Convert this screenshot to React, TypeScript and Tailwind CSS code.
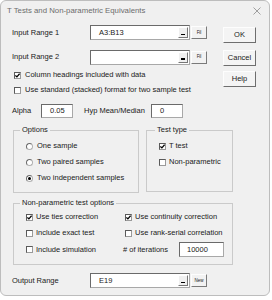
import React from "react";

const font = "font-['Liberation_Sans',Arial,sans-serif]";

function Check({ checked }: { checked?: boolean }) {
  return (
    <span className="flex h-[7px] w-[7px] shrink-0 items-center justify-center border border-[#9a9a9a] border-l-[#5a5a5a] border-t-[#5a5a5a] bg-white">
      {checked && (
        <svg width="5" height="5" viewBox="0 0 5 5">
          <path d="M0.4 2.4 L1.9 3.9 L4.6 0.7" stroke="#000" strokeWidth="1.3" fill="none" />
        </svg>
      )}
    </span>
  );
}

function Radio({ checked }: { checked?: boolean }) {
  return (
    <span className="flex h-[7px] w-[7px] shrink-0 items-center justify-center rounded-full border border-[#b0b0b0] border-l-[#6a6a6a] border-t-[#6a6a6a] bg-white">
      {checked && <span className="h-[3px] w-[3px] rounded-full bg-black" />}
    </span>
  );
}

function RefEdit({ value }: { value?: string }) {
  return (
    <div className="flex h-[15px] w-[100px] items-center border border-[#a8a8a8] border-l-[#6a6a6a] border-t-[#6a6a6a] bg-white">
      <span className="flex-1 pl-[8px]">{value}</span>
      <span className="mr-[1px] flex h-[11px] w-[10px] items-end justify-center border border-white border-b-[#777] border-r-[#777] bg-[#f0f0f0] pb-[2px]">
        <span className="h-[1.5px] w-[4px] bg-black" />
      </span>
    </div>
  );
}

function SmallBtn({ label }: { label: string }) {
  return (
    <div className="ml-[1px] flex h-[13px] w-[16px] items-center justify-center border border-[#fdfdfd] border-b-[#7a7a7a] border-r-[#7a7a7a] bg-[#f2f2f2] text-[4.5px]">
      {label}
    </div>
  );
}

function Btn({ label, className = "" }: { label: string; className?: string }) {
  return (
    <div
      className={`flex h-[16px] w-[33px] items-center justify-center border border-[#fdfdfd] border-b-[#6e6e6e] border-r-[#6e6e6e] bg-[#f4f4f4] ${className}`}
    >
      {label}
    </div>
  );
}

function Field({ value, w, pl }: { value: string; w: string; pl: string }) {
  return (
    <div className={`flex h-[14px] items-center border border-[#a8a8a8] border-l-[#6a6a6a] border-t-[#6a6a6a] bg-white ${w} ${pl}`}>
      {value}
    </div>
  );
}

export default function App() {
  return (
    <div className={`h-[300px] w-[272px] overflow-hidden bg-white text-[7.5px] leading-[10px] text-[#1a1a1a] ${font}`}>
      <div className="flex h-[296px] w-[270px] flex-col rounded-[6px] border border-[#bdbdbd] bg-[#f0f0f0]">
        {/* title bar */}
        <div className="flex h-[19px] items-center justify-between pl-[6px] pr-[8px]">
          <span className="text-[7.8px] text-[#6c6c6c]">T Tests and Non-parametric Equivalents</span>
          <svg width="8" height="8" viewBox="0 0 8 8">
            <path d="M0.5 0.5 L7.5 7.5 M7.5 0.5 L0.5 7.5" stroke="#8a8a8a" strokeWidth="0.8" />
          </svg>
        </div>

        <div className="flex flex-col pl-[11px] pt-[5px]">
          {/* top part with buttons */}
          <div className="flex">
            <div className="flex w-[196px] flex-col">
              <div className="flex h-[15px] items-center">
                <span className="w-[78px]">Input Range 1</span>
                <RefEdit value="A3:B13" />
                <SmallBtn label="Fil" />
              </div>
              <div className="mt-[10px] flex h-[14px] items-center">
                <span className="w-[78px]">Input Range 2</span>
                <RefEdit />
                <SmallBtn label="Fil" />
              </div>
              <div className="mt-[4px] flex h-[14px] items-center gap-[4px] pl-[2px]">
                <Check checked />
                <span>Column headings included with data</span>
              </div>
              <div className="mt-[1px] flex h-[14px] items-center gap-[4px] pl-[2px]">
                <Check />
                <span>Use standard (stacked) format for two sample test</span>
              </div>
            </div>
            <div className="ml-[15px] flex flex-col">
              <Btn label="OK" className="mt-[2px]" />
              <Btn label="Cancel" className="mt-[7px]" />
              <Btn label="Help" className="mt-[5px]" />
            </div>
          </div>

          {/* alpha row */}
          <div className="mt-[7px] flex h-[14px] items-center">
            <span className="w-[29px]">Alpha</span>
            <Field value="0.05" w="w-[32px]" pl="pl-[8px]" />
            <span className="ml-[11px] w-[67px]">Hyp Mean/Median</span>
            <Field value="0" w="w-[32px]" pl="pl-[8px]" />
          </div>

          {/* option groups */}
          <div className="ml-[1px] mt-[7px] flex gap-[7px]">
            <fieldset className="h-[68px] w-[126px] border border-[#cacaca]">
              <legend className="ml-[6px] px-[2px]">Options</legend>
              <div className="flex flex-col pl-[12px] pt-[5px]">
                <div className="flex h-[12px] items-center gap-[4px]">
                  <Radio />
                  <span>One sample</span>
                </div>
                <div className="mt-[4px] flex h-[12px] items-center gap-[4px]">
                  <Radio />
                  <span>Two paired samples</span>
                </div>
                <div className="mt-[4px] flex h-[12px] items-center gap-[4px]">
                  <Radio checked />
                  <span>Two independent samples</span>
                </div>
              </div>
            </fieldset>
            <fieldset className="h-[67px] w-[87px] border border-[#cacaca]">
              <legend className="ml-[8px] px-[2px]">Test type</legend>
              <div className="flex flex-col pl-[12px] pt-[5px]">
                <div className="flex h-[12px] items-center gap-[3px]">
                  <Check checked />
                  <span>T test</span>
                </div>
                <div className="mt-[4px] flex h-[12px] items-center gap-[3px]">
                  <Check />
                  <span>Non-parametric</span>
                </div>
              </div>
            </fieldset>
          </div>

          <fieldset className="ml-[1px] mt-[5px] h-[67px] w-[220px] border border-[#cacaca]">
            <legend className="ml-[6px] px-[2px]">Non-parametric test options</legend>
            <div className="grid grid-cols-[99px_1fr] pl-[12px] pt-[3px]">
              <div className="flex h-[12px] items-center gap-[3px]">
                <Check checked />
                <span>Use ties correction</span>
              </div>
              <div className="flex h-[12px] items-center gap-[3px]">
                <Check checked />
                <span>Use continuity correction</span>
              </div>
              <div className="mt-[4px] flex h-[12px] items-center gap-[3px]">
                <Check />
                <span>Include exact test</span>
              </div>
              <div className="mt-[4px] flex h-[12px] items-center gap-[3px]">
                <Check />
                <span>Use rank-serial correlation</span>
              </div>
              <div className="mt-[3px] flex h-[15px] items-center gap-[3px]">
                <Check />
                <span>Include simulation</span>
              </div>
              <div className="-ml-[2px] mt-[3px] flex h-[15px] items-center">
                <span className="w-[56px]"># of iterations</span>
                <Field value="10000" w="w-[45px] h-[15px]" pl="pl-[7px]" />
              </div>
            </div>
          </fieldset>

          {/* output range */}
          <div className="mt-[8px] flex h-[15px] items-center">
            <span className="w-[78px]">Output Range</span>
            <RefEdit value="E19" />
            <SmallBtn label="New" />
          </div>
        </div>
      </div>
    </div>
  );
}
